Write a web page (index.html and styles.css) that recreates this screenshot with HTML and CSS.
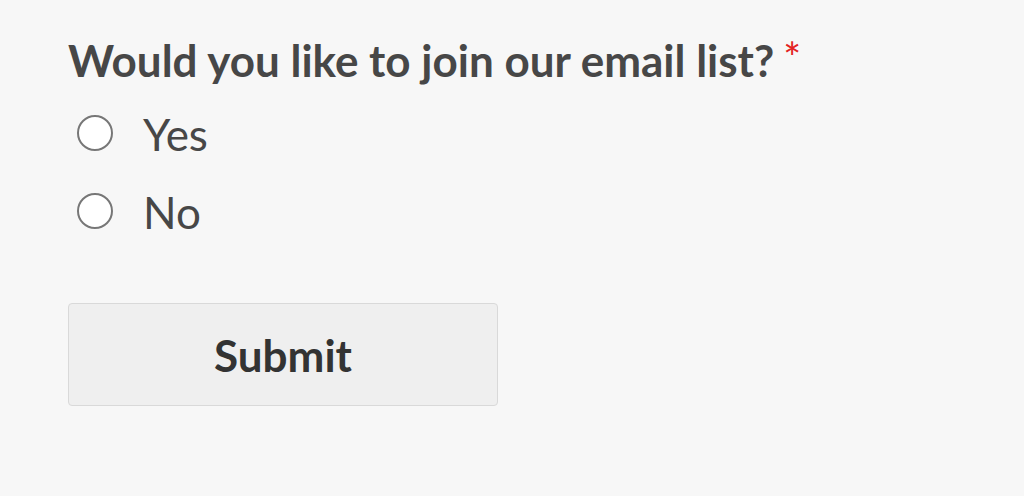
FILE: index.html
```html
<!DOCTYPE html>
<html lang="en">
<head>
    <meta charset="UTF-8">
    <meta name="viewport" content="width=device-width, initial-scale=1.0">
    <title>Email list</title>
    <link rel="stylesheet" href="styles.css">
</head>
<body>
    <form class="signupForm">
        <div class="question">Would you like to join our email list?<span class="required">*</span></div>
        <div class="choices">
            <label class="choice">
                <input type="radio" name="emailList" value="yes">
                <span class="radioCircle"></span>
                Yes
            </label>
            <label class="choice">
                <input type="radio" name="emailList" value="no">
                <span class="radioCircle"></span>
                No
            </label>
        </div>
        <button type="button" class="submitButton">Submit</button>
    </form>
</body>
</html>
```

FILE: styles.css
```css
html, body {
    margin: 0;
    background-color: #f7f7f7;
}
body {
    font-family: Lato, "Open Sans", sans-serif;
    color: #474747;
}
.signupForm {
    padding: 31px 68px;
}
.question {
    font-size: 44px;
    font-weight: 700;
    line-height: 52px;
}
.required {
    color: #e32222;
    font-weight: 400;
    font-size: 42px;
    margin-left: 9px;
    vertical-align: 4px;
}
.choices {
    display: flex;
    flex-direction: column;
    gap: 20px;
    margin-top: 19px;
    margin-left: 9px;
}
.choice {
    display: flex;
    align-items: center;
    gap: 30px;
    font-size: 44px;
    line-height: 58px;
}
.choice input {
    display: none;
}
.radioCircle {
    width: 32px;
    height: 32px;
    margin-top: -2px;
    border: 2px solid #777;
    border-radius: 50%;
    background-color: #fff;
}
.submitButton {
    display: block;
    margin-top: 62px;
    width: 430px;
    height: 103px;
    background-color: #efefef;
    border: 1px solid #d9d9d9;
    border-radius: 4px;
    font-family: Lato, sans-serif;
    font-size: 44px;
    font-weight: 700;
    color: #333;
}
```
